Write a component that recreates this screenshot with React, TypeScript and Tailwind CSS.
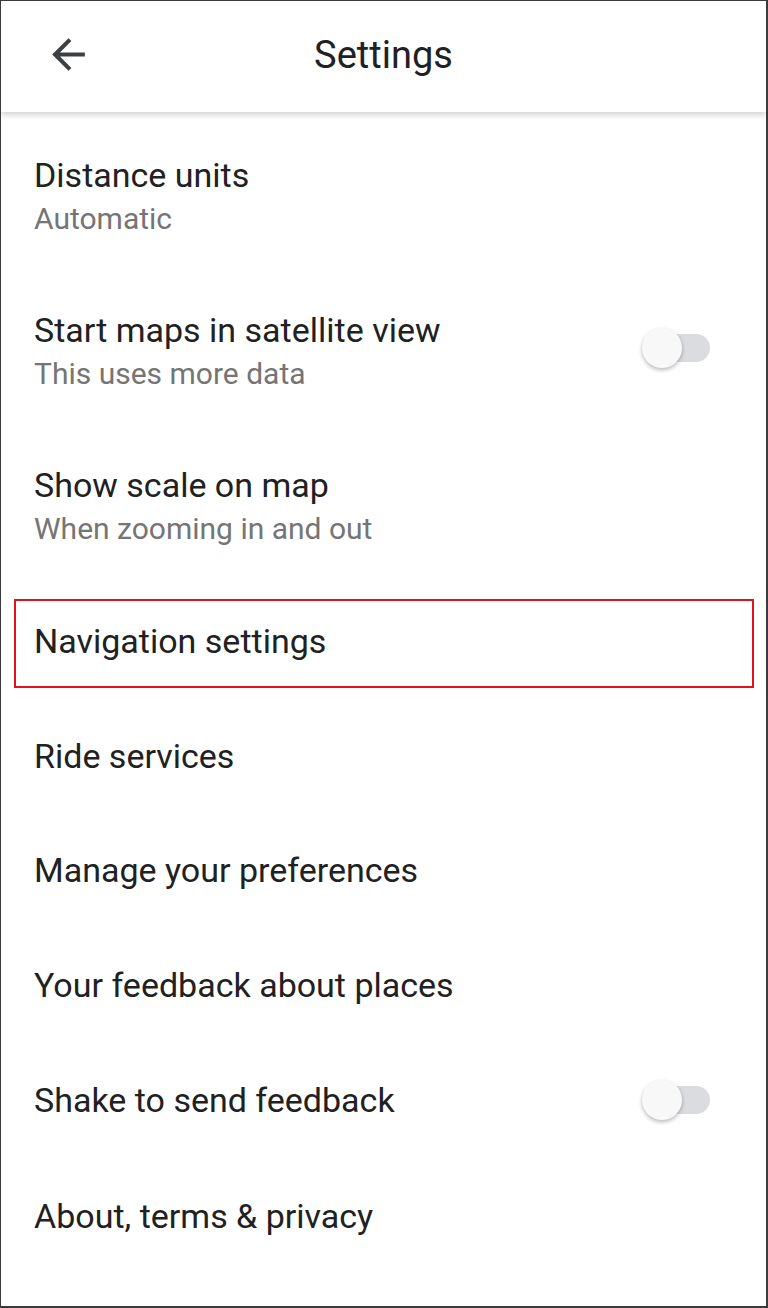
import React from "react";

const font = { fontFamily: "Roboto, 'Noto Sans', Arial, sans-serif" };

function Toggle({ className = "" }: { className?: string }) {
  return (
    <div className={"relative w-[68px] h-[42px] shrink-0 " + className}>
      <div className="absolute right-0 top-[7px] w-[56px] h-[28px] rounded-full bg-[#dadce0]" />
      <div className="absolute left-0 top-px w-[40px] h-[40px] rounded-full bg-[#f8f8f8] shadow-[0_2px_4px_rgba(0,0,0,0.28)]" />
    </div>
  );
}

function TwoLine({ title, sub, toggle }: { title: string; sub: string; toggle?: boolean }) {
  return (
    <div className="flex items-center pl-[33px] pr-[56px] pt-[43px] pb-[28px]">
      <div className="flex-1 min-w-0">
        <div className="text-[34px] leading-[40px] text-[#212121]">{title}</div>
        <div className="mt-[4px] text-[30px] leading-[40px] text-[#757575]">{sub}</div>
      </div>
      {toggle && <Toggle className="mb-[8px]" />}
    </div>
  );
}

function OneLine({ title, toggle, highlight }: { title: string; toggle?: boolean; highlight?: boolean }) {
  return (
    <div className="relative flex items-center pl-[33px] pr-[56px] pt-[44px] pb-[30.5px]">
      {highlight && (
        <div className="absolute left-[13px] right-[12px] top-[22px] bottom-[4px] border-2 border-[#e0141c]" />
      )}
      <div className="flex-1 min-w-0 text-[34px] leading-[40px] text-[#212121]">{title}</div>
      {toggle && <Toggle />}
    </div>
  );
}

export default function App() {
  return (
    <div
      style={font}
      className="w-[768px] h-[1308px] bg-white border-l border-t border-r-2 border-b-2 border-[#3a3a3a] overflow-hidden"
    >
      <header className="relative z-10 h-[111px] flex items-center justify-center bg-white shadow-[0_3px_6px_rgba(0,0,0,0.18)]">
        <svg
          viewBox="0 0 24 24"
          className="absolute left-[43px] top-[29px] w-[49px] h-[49px]"
          fill="#3c4043"
        >
          <path d="M20 11H7.83l5.59-5.59L12 4l-8 8 8 8 1.41-1.41L7.83 13H20v-2z" />
        </svg>
        <div className="pb-[4px] text-[38px] leading-[46px] text-[#202124]">Settings</div>
      </header>
      <main>
        <TwoLine title="Distance units" sub="Automatic" />
        <TwoLine title="Start maps in satellite view" sub="This uses more data" toggle />
        <TwoLine title="Show scale on map" sub="When zooming in and out" />
        <OneLine title="Navigation settings" highlight />
        <OneLine title="Ride services" />
        <OneLine title="Manage your preferences" />
        <OneLine title="Your feedback about places" />
        <OneLine title="Shake to send feedback" toggle />
        <OneLine title="About, terms & privacy" />
      </main>
    </div>
  );
}
